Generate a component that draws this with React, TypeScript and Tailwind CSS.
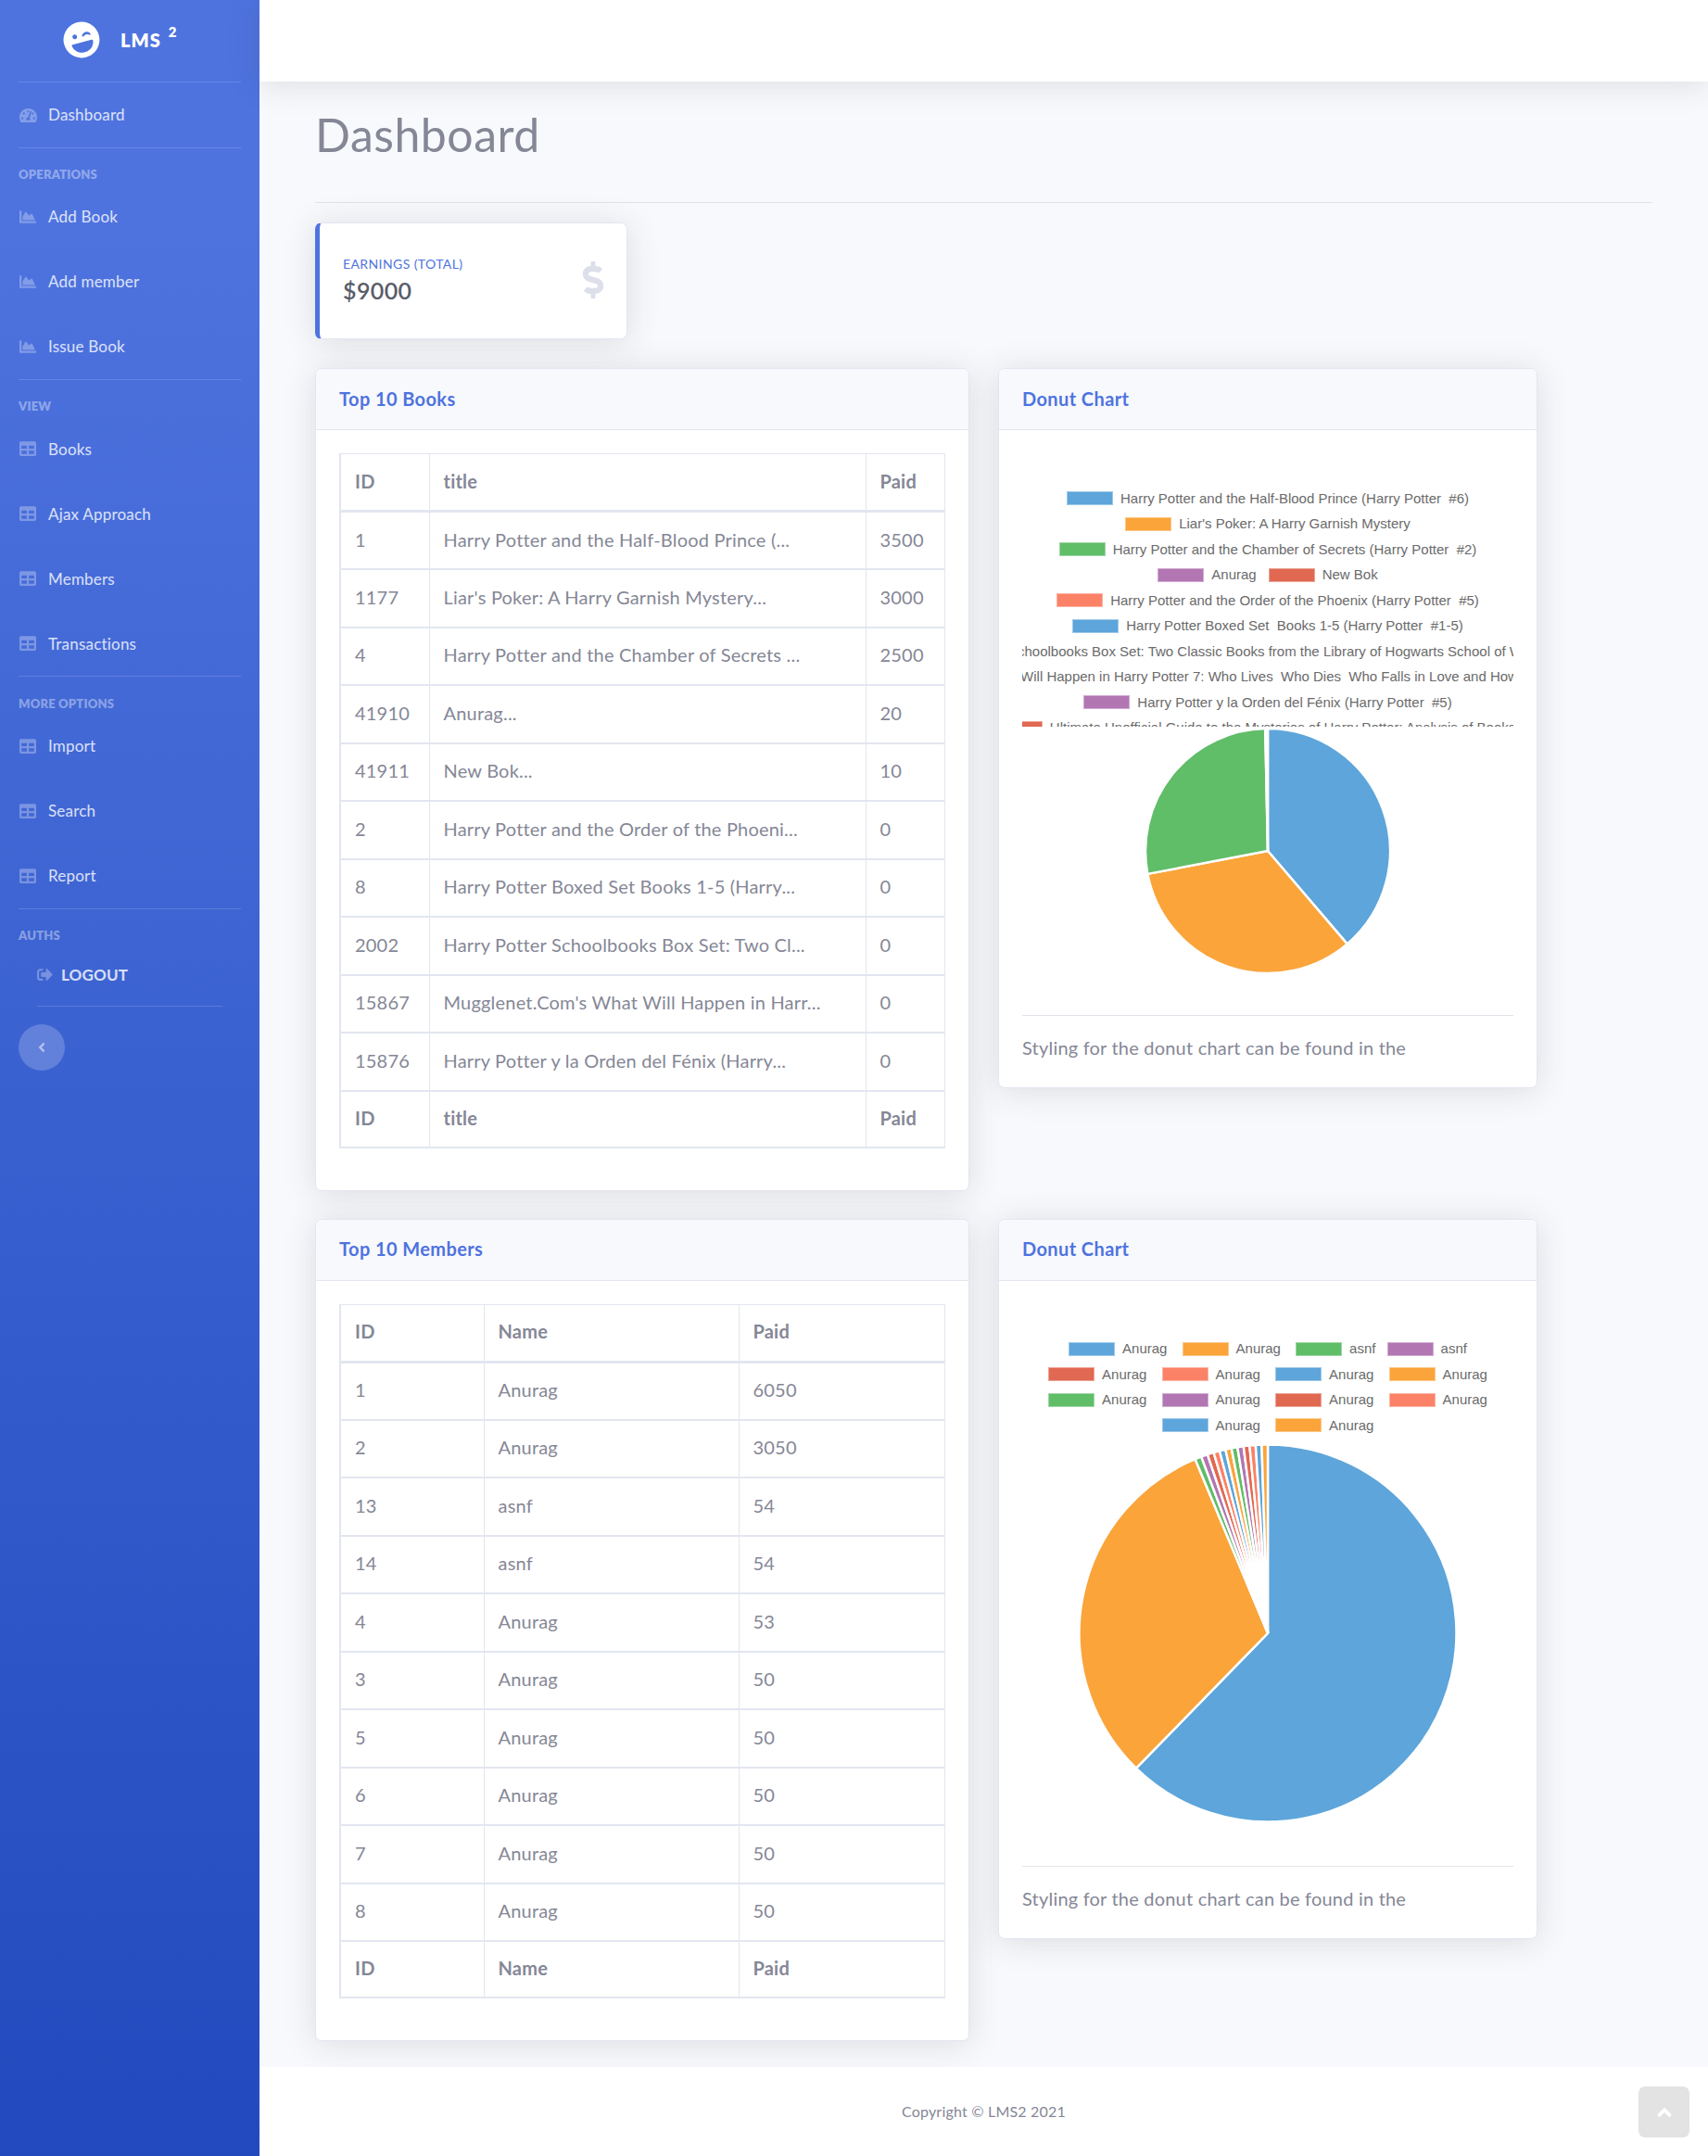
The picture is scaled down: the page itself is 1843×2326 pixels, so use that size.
import React from "react";
import {
  FaLaughWink,
  FaTachometerAlt,
  FaChartArea,
  FaTable,
  FaSignOutAlt,
  FaAngleLeft,
  FaAngleUp,
  FaDollarSign,
} from "react-icons/fa";

const BLUE = "#5DA5DA";
const ORANGE = "#FAA43A";
const GREEN = "#60BD68";
const PURPLE = "#B276B2";
const RED = "#E16851";
const SALMON = "#FB8267";

function Divider({ inset }: { inset?: boolean }) {
  return <div className={inset ? "h-px mx-10 bg-white/15" : "h-px mx-5 bg-white/15"} />;
}

function Heading({ children }: { children: React.ReactNode }) {
  return (
    <div className="h-[39.2px] px-5 pt-[18.2px] text-[13px] leading-[20px] font-extrabold uppercase text-white/40">
      {children}
    </div>
  );
}

function NavItem({ icon, label }: { icon: React.ReactNode; label: string }) {
  return (
    <div className="h-[70px] pl-[21px] flex items-center text-[17px] text-white/80">
      <span className="w-[31px] flex items-center text-white/30">{icon}</span>
      <span>{label}</span>
    </div>
  );
}

function Sidebar() {
  const chart = <FaChartArea size={18} />;
  const table = <FaTable size={18} />;
  return (
    <aside className="w-[280px] shrink-0 flex flex-col bg-gradient-to-b from-[#4e73df] from-10% to-[#224abe]">
      <div className="h-[88px] flex items-center pl-[68px] pb-[2px] text-white">
        <FaLaughWink size={40} className="-rotate-15" />
        <span className="ml-[22px] text-[20px] font-extrabold tracking-[1px] leading-none flex items-start">
          LMS
          <span className="ml-[8px] -mt-[6px] text-[15px]">2</span>
        </span>
      </div>
      <Divider />
      <NavItem icon={<FaTachometerAlt size={19} />} label="Dashboard" />
      <Divider />
      <Heading>Operations</Heading>
      <NavItem icon={chart} label="Add Book" />
      <NavItem icon={chart} label="Add member" />
      <NavItem icon={chart} label="Issue Book" />
      <Divider />
      <Heading>View</Heading>
      <NavItem icon={table} label="Books" />
      <NavItem icon={table} label="Ajax Approach" />
      <NavItem icon={table} label="Members" />
      <NavItem icon={table} label="Transactions" />
      <Divider />
      <Heading>More Options</Heading>
      <NavItem icon={table} label="Import" />
      <NavItem icon={table} label="Search" />
      <NavItem icon={table} label="Report" />
      <Divider />
      <Heading>Auths</Heading>
      <div className="h-[67px] pl-[40px] -mt-[2px] flex items-center text-[17px] font-bold text-white/80">
        <span className="w-[26px] text-white/30">
          <FaSignOutAlt size={17} />
        </span>
        <span>LOGOUT</span>
      </div>
      <Divider inset />
      <div className="ml-5 mt-[19px] w-[50px] h-[50px] rounded-full bg-white/20 flex items-center justify-center text-white/50">
        <FaAngleLeft size={16} />
      </div>
    </aside>
  );
}

const cellBase = "border-x border-b-2 border-[#e3e6f0] pl-[15px] pr-[15px] pt-0 pb-[3px] overflow-hidden whitespace-nowrap";

function DataTable({
  widths,
  head,
  rows,
}: {
  widths: number[];
  head: string[];
  rows: string[][];
}) {
  return (
    <table className="w-[652px] table-fixed border-collapse border-t border-[#e3e6f0] text-[20px] leading-[30px] text-[#858796]">
      <colgroup>
        {widths.map((w, i) => (
          <col key={i} style={{ width: w }} />
        ))}
      </colgroup>
      <thead>
        <tr className="h-[62px]">
          {head.map((h, i) => (
            <th key={i} className={`${cellBase} border-b-[3px] text-left font-bold ${i === 0 ? "border-l-2" : ""}`}>
              {h}
            </th>
          ))}
        </tr>
      </thead>
      <tbody>
        {rows.map((r, ri) => (
          <tr key={ri} className="h-[62.5px]">
            {r.map((c, i) => (
              <td key={i} className={`${cellBase} ${i === 0 ? "border-l-2" : ""}`}>
                {c}
              </td>
            ))}
          </tr>
        ))}
      </tbody>
      <tfoot>
        <tr className="h-[61px]">
          {head.map((h, i) => (
            <th key={i} className={`${cellBase} text-left font-bold ${i === 0 ? "border-l-2" : ""}`}>
              {h}
            </th>
          ))}
        </tr>
      </tfoot>
    </table>
  );
}

function Card({ title, width, children }: { title: string; width: string; children: React.ReactNode }) {
  return (
    <section className={`${width} shrink-0 self-start bg-white rounded-[7px] border border-[#e3e6f0] shadow-[0_3px_35px_rgba(58,59,69,0.15)] overflow-hidden`}>
      <div className="h-[66px] pl-[25px] pb-[2px] flex items-center bg-[#f8f9fc] border-b border-[#e3e6f0] text-[20px] tracking-[0.4px] font-bold text-[#4e73df]">
        {title}
      </div>
      {children}
    </section>
  );
}

type LegendItem = { color: string; label: string; width?: string };

function Legend({ rows, height, gap }: { rows: LegendItem[][]; height: string; gap: string }) {
  return (
    <div
      className={`${height} overflow-hidden font-['Liberation_Sans',Arial,sans-serif] tracking-normal text-[15px] text-[#6b6b6b]`}
    >
      {rows.map((row, i) => (
        <div key={i} className={`h-[27.5px] flex items-center justify-center whitespace-pre ${gap}`}>
          {row.map((it, j) => (
            <div key={j} className={`flex items-center gap-[8px] shrink-0 ${it.width ?? ""}`}>
              <span
                className="w-[50px] h-[15px] shrink-0 border border-white/40"
                style={{ backgroundColor: it.color }}
              />
              <span>{it.label}</span>
            </div>
          ))}
        </div>
      ))}
    </div>
  );
}

function Pie({
  data,
  colors,
  r,
  cy,
  height,
}: {
  data: number[];
  colors: string[];
  r: number;
  cy: number;
  height: number;
}) {
  const cx = 265;
  const total = data.reduce((a, b) => a + b, 0);
  let angle = -Math.PI / 2;
  const paths = data.map((v, i) => {
    const a0 = angle;
    const a1 = angle + (v / total) * Math.PI * 2;
    angle = a1;
    const large = a1 - a0 > Math.PI ? 1 : 0;
    const d = `M${cx} ${cy}L${cx + r * Math.cos(a0)} ${cy + r * Math.sin(a0)}A${r} ${r} 0 ${large} 1 ${
      cx + r * Math.cos(a1)
    } ${cy + r * Math.sin(a1)}Z`;
    return <path key={i} d={d} fill={colors[i % colors.length]} stroke="#fff" strokeWidth={2.5} strokeLinejoin="bevel" />;
  });
  return (
    <svg width={531} height={height} className="block">
      {paths}
    </svg>
  );
}

function ChartBody({
  legend,
  children,
}: {
  legend: React.ReactNode;
  children: React.ReactNode;
}) {
  return (
    <div className="px-[25px] pt-[60px] pb-[28px]">
      {legend}
      {children}
      <div className="h-px bg-[#e3e4eb] mt-[20px] mb-[19px]" />
      <p className="text-[20px] leading-[30px] text-[#858796]">Styling for the donut chart can be found in the</p>
    </div>
  );
}

const bookRows = [
  ["1", "Harry Potter and the Half-Blood Prince (...", "3500"],
  ["1177", "Liar's Poker: A Harry Garnish Mystery...", "3000"],
  ["4", "Harry Potter and the Chamber of Secrets ...", "2500"],
  ["41910", "Anurag...", "20"],
  ["41911", "New Bok...", "10"],
  ["2", "Harry Potter and the Order of the Phoeni...", "0"],
  ["8", "Harry Potter Boxed Set Books 1-5 (Harry...", "0"],
  ["2002", "Harry Potter Schoolbooks Box Set: Two Cl...", "0"],
  ["15867", "Mugglenet.Com's What Will Happen in Harr...", "0"],
  ["15876", "Harry Potter y la Orden del Fénix (Harry...", "0"],
];

const memberRows = [
  ["1", "Anurag", "6050"],
  ["2", "Anurag", "3050"],
  ["13", "asnf", "54"],
  ["14", "asnf", "54"],
  ["4", "Anurag", "53"],
  ["3", "Anurag", "50"],
  ["5", "Anurag", "50"],
  ["6", "Anurag", "50"],
  ["7", "Anurag", "50"],
  ["8", "Anurag", "50"],
];

const legend1: LegendItem[][] = [
  [{ color: BLUE, label: "Harry Potter and the Half-Blood Prince (Harry Potter  #6)" }],
  [{ color: ORANGE, label: "Liar's Poker: A Harry Garnish Mystery" }],
  [{ color: GREEN, label: "Harry Potter and the Chamber of Secrets (Harry Potter  #2)" }],
  [
    { color: PURPLE, label: "Anurag" },
    { color: RED, label: "New Bok" },
  ],
  [{ color: SALMON, label: "Harry Potter and the Order of the Phoenix (Harry Potter  #5)" }],
  [{ color: BLUE, label: "Harry Potter Boxed Set  Books 1-5 (Harry Potter  #1-5)" }],
  [{ color: ORANGE, label: "Harry Potter Schoolbooks Box Set: Two Classic Books from the Library of Hogwarts School of Witchcraft and Wizardry", width: "pr-[3px]" }],
  [{ color: GREEN, label: "Mugglenet.Com's What Will Happen in Harry Potter 7: Who Lives  Who Dies  Who Falls in Love and How the Adventure Finally Ends", width: "pr-[32px]" }],
  [{ color: PURPLE, label: "Harry Potter y la Orden del Fénix (Harry Potter  #5)" }],
  [{ color: RED, label: "Ultimate Unofficial Guide to the Mysteries of Harry Potter: Analysis of Books 1-4" }],
];

const A = "w-[122.5px]";
const legend2: LegendItem[][] = [
  [
    { color: BLUE, label: "Anurag", width: A },
    { color: ORANGE, label: "Anurag", width: A },
    { color: GREEN, label: "asnf", width: "w-[98.5px]" },
    { color: PURPLE, label: "asnf" },
  ],
  [
    { color: RED, label: "Anurag", width: A },
    { color: SALMON, label: "Anurag", width: A },
    { color: BLUE, label: "Anurag", width: A },
    { color: ORANGE, label: "Anurag" },
  ],
  [
    { color: GREEN, label: "Anurag", width: A },
    { color: PURPLE, label: "Anurag", width: A },
    { color: RED, label: "Anurag", width: A },
    { color: SALMON, label: "Anurag" },
  ],
  [
    { color: BLUE, label: "Anurag", width: A },
    { color: ORANGE, label: "Anurag" },
  ],
];

const palette = [BLUE, ORANGE, GREEN, PURPLE, RED, SALMON];

export default function App() {
  return (
    <div className="relative w-[1843px] h-[2326px] flex overflow-hidden bg-[#f8f9fc] font-['Lato',sans-serif] tracking-[0.2px]">
      <Sidebar />
      <div className="flex-1 flex flex-col min-w-0">
        <header className="h-[88px] shrink-0 bg-white shadow-[0_3px_35px_rgba(58,59,69,0.15)]" />
        <main className="flex-1 px-[60px]">
          <h1 className="mt-[27px] text-[50px] leading-[60px] font-normal tracking-[0.5px] text-[#858796]">Dashboard</h1>
          <div className="h-px bg-[#e1e2e8] mt-[43px]" />
          <div className="mt-[21px] w-[337px] h-[126px] bg-white rounded-[7px] border border-[#e3e6f0] border-l-[5px] border-l-[#4e73df] shadow-[0_3px_35px_rgba(58,59,69,0.15)] pl-[25px] pr-[16px] flex items-center justify-between">
            <div>
              <div className="-mt-[2px] text-[14px] leading-[17px] tracking-[0.4px] text-[#4e73df] uppercase">Earnings (Total)</div>
              <div className="mt-[5px] text-[25px] leading-[30px] tracking-[0.4px] font-semibold text-[#5a5c69]">$9000</div>
            </div>
            <FaDollarSign size={40} className="-mt-[3px] text-[#dddfeb]" />
          </div>

          <div className="mt-[31px] flex gap-[31px]">
            <Card title="Top 10 Books" width="w-[706px]">
              <div className="px-[25px] pt-[25px] pb-[45px]">
                <DataTable widths={[96, 471, 85]} head={["ID", "title", "Paid"]} rows={bookRows} />
              </div>
            </Card>
            <Card title="Donut Chart" width="w-[582px]">
              <ChartBody legend={<Legend rows={legend1} height="h-[260px]" gap="gap-[13px]" />}>
                <Pie data={[3500, 3000, 2500, 20, 10]} colors={palette} r={132} cy={134} height={291} />
              </ChartBody>
            </Card>
          </div>

          <div className="mt-[30px] flex gap-[31px]">
            <Card title="Top 10 Members" width="w-[706px]">
              <div className="px-[25px] pt-[25px] pb-[45px]">
                <DataTable widths={[155, 275, 222]} head={["ID", "Name", "Paid"]} rows={memberRows} />
              </div>
            </Card>
            <Card title="Donut Chart" width="w-[582px]">
              <ChartBody legend={<Legend rows={legend2} height="h-[114px]" gap="gap-0" />}>
                <Pie
                  data={[6050, 3050, 54, 54, 53, 50, 50, 50, 50, 50, 50, 50, 50, 50]}
                  colors={palette}
                  r={203.5}
                  cy={206}
                  height={437}
                />
              </ChartBody>
            </Card>
          </div>
        </main>
        <footer className="h-[96px] shrink-0 bg-white flex items-center justify-center text-[16px] text-[#858796]">
          Copyright © LMS2 2021
        </footer>
      </div>
      <div className="absolute right-[20px] bottom-[20px] w-[55px] h-[55px] rounded-[7px] bg-[#e3e3e4] flex items-center justify-center text-white">
        <FaAngleUp size={24} />
      </div>
    </div>
  );
}
